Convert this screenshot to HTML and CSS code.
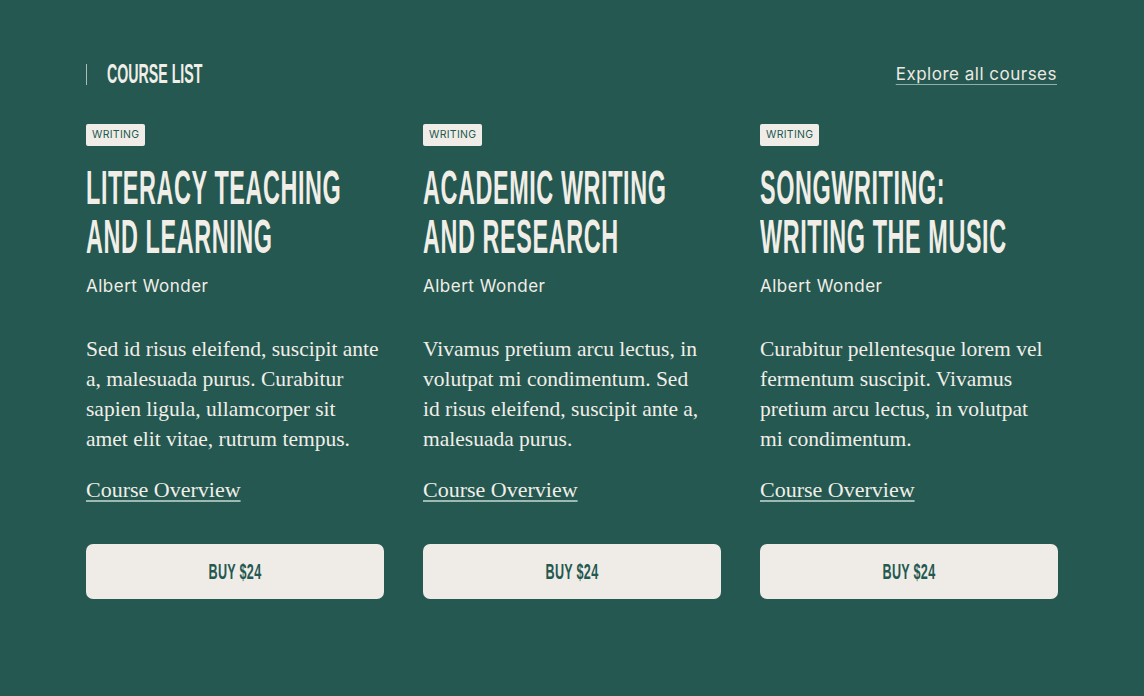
FILE: index.html
```html
<!DOCTYPE html>
<html lang="en">
<head>
    <meta charset="UTF-8">
    <meta name="viewport" content="width=device-width, initial-scale=1.0">
    <title>Course List</title>
    <link rel="stylesheet" href="styles.css">
</head>
<body>
    <div class="container">
        <div class="header">
            <h1 class="section-title"><span class="tall">COURSE LIST</span></h1>
            <a class="explore" href="#">Explore all courses</a>
        </div>

        <div class="courses">
            <div class="course">
                <span class="tag">WRITING</span>
                <h2 class="course-title"><span class="tall">LITERACY TEACHING<br>AND LEARNING</span></h2>
                <div class="author">Albert Wonder</div>
                <p class="summary">Sed id risus eleifend, suscipit ante<br>a, malesuada purus. Curabitur<br>sapien ligula, ullamcorper sit<br>amet elit vitae, rutrum tempus.</p>
                <a class="overview" href="#">Course Overview</a>
                <button class="buy"><span class="tall">BUY $24</span></button>
            </div>

            <div class="course">
                <span class="tag">WRITING</span>
                <h2 class="course-title"><span class="tall">ACADEMIC WRITING<br>AND RESEARCH</span></h2>
                <div class="author">Albert Wonder</div>
                <p class="summary">Vivamus pretium arcu lectus, in<br>volutpat mi condimentum. Sed<br>id risus eleifend, suscipit ante a,<br>malesuada purus.</p>
                <a class="overview" href="#">Course Overview</a>
                <button class="buy"><span class="tall">BUY $24</span></button>
            </div>

            <div class="course">
                <span class="tag">WRITING</span>
                <h2 class="course-title"><span class="tall">SONGWRITING:<br>WRITING THE MUSIC</span></h2>
                <div class="author">Albert Wonder</div>
                <p class="summary">Curabitur pellentesque lorem vel<br>fermentum suscipit. Vivamus<br>pretium arcu lectus, in volutpat<br>mi condimentum.</p>
                <a class="overview" href="#">Course Overview</a>
                <button class="buy"><span class="tall">BUY $24</span></button>
            </div>
        </div>
    </div>
</body>
</html>
```

FILE: styles.css
```css
body {
    margin: 0;
    padding: 0;
    background-color: #245850;
    color: #f1eee8;
    font-family: Inter, "Noto Sans", sans-serif;
}

.container {
    width: 972px;
    margin: 0 auto;
    padding-top: 62px;
}

/* condensed display face: small Liberation Sans bold stretched upward */
.tall {
    display: inline-block;
    font-family: "Liberation Sans", Arial, sans-serif;
    font-weight: bold;
    white-space: nowrap;
    transform: scaleY(1.92);
    transform-origin: left top;
}

.header {
    display: flex;
    justify-content: space-between;
    align-items: center;
    height: 24px;
}

.section-title {
    margin: 0;
    height: 21px;
    padding-left: 20px;
    border-left: 1px solid #a7bfb8;
    font-size: 14.2px;
    line-height: 11px;
    font-weight: normal;
}

.section-title .tall {
    transform: translateY(-2px) scaleY(1.97);
}

.explore {
    color: #ece9e2;
    font-size: 17px;
    letter-spacing: 0.5px;
    text-decoration: underline;
    text-decoration-color: #8fb0a7;
    text-underline-offset: 4px;
    margin-right: 1px;
}

.courses {
    display: grid;
    grid-template-columns: repeat(3, 298px);
    column-gap: 39px;
    margin-top: 38px;
}

.course {
    display: flex;
    flex-direction: column;
    align-items: flex-start;
    min-width: 0;
}

.tag {
    background-color: #f0ede8;
    color: #245850;
    font-size: 10.5px;
    letter-spacing: 0.3px;
    line-height: 22px;
    padding: 0 6px;
    border-radius: 2px;
}

.course-title {
    margin: 20px 0 0;
    height: 96px;
    font-size: 23.4px;
    line-height: 23.8px;
    letter-spacing: 0.6px;
    font-weight: normal;
}

.course-title .tall {
    transform: scaleY(2.02);
}

.author {
    margin-top: 12px;
    font-size: 17px;
    letter-spacing: 0.5px;
    line-height: 24px;
}

.summary {
    margin: 36px 0 0;
    font-family: "Liberation Serif", serif;
    font-size: 21.5px;
    line-height: 30px;
    white-space: nowrap;
}

.overview {
    margin-top: 22px;
    font-family: "Liberation Serif", serif;
    font-size: 22px;
    line-height: 28px;
    color: #f1eee8;
    text-decoration: underline;
    text-decoration-color: #9dbab2;
    text-underline-offset: 3px;
}

.buy {
    margin-top: 40px;
    width: 100%;
    height: 55px;
    border: none;
    border-radius: 7px;
    background-color: #efece7;
    color: #245850;
    font-size: 12.6px;
    letter-spacing: 0.3px;
    cursor: pointer;
}

.buy .tall {
    transform: scaleY(1.68);
    transform-origin: center;
}
```
